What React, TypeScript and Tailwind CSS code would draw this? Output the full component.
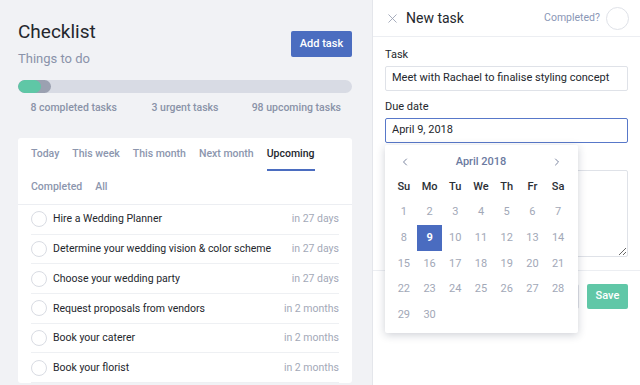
import { X, ChevronLeft, ChevronRight } from "lucide-react";

const TABS = ["Today", "This week", "This month", "Next month", "Upcoming"];

const TASKS = [
  { title: "Hire a Wedding Planner", due: "in 27 days" },
  { title: "Determine your wedding vision & color scheme", due: "in 27 days" },
  { title: "Choose your wedding party", due: "in 27 days" },
  { title: "Request proposals from vendors", due: "in 2 months" },
  { title: "Book your caterer", due: "in 2 months" },
  { title: "Book your florist", due: "in 2 months" },
];

const DAY_NAMES = ["Su", "Mo", "Tu", "We", "Th", "Fr", "Sa"];
const DAYS = Array.from({ length: 30 }, (_, i) => i + 1);

function Calendar() {
  return (
    <div className="absolute left-0 top-[27px] z-10 w-[193px] rounded-[2px] bg-white px-[6px] pb-[5px] pr-[7px] shadow-[0_2px_8px_rgba(30,40,70,0.22)]">
      <div className="flex items-center justify-between px-[8px] pt-[10px] pb-[5px] text-[11px] leading-[14px] text-[#6b7a9f]">
        <ChevronLeft size={12} strokeWidth={2} className="text-[#7b85a0]" />
        <span className="font-medium">April 2018</span>
        <ChevronRight size={12} strokeWidth={2} className="text-[#7b85a0]" />
      </div>
      <div className="grid grid-cols-7">
        {DAY_NAMES.map((d) => (
          <div key={d} className="flex h-[25.7px] items-center justify-center text-[11px] font-medium text-[#2b2f36]">
            {d}
          </div>
        ))}
        {DAYS.map((d) => (
          <div
            key={d}
            className={
              d === 9
                ? "flex h-[25.7px] items-center justify-center bg-[#4a6cc0] text-[11px] font-bold text-white"
                : "flex h-[25.7px] items-center justify-center text-[11px] text-[#a2a8b7]"
            }
          >
            {d}
          </div>
        ))}
      </div>
    </div>
  );
}

export default function App() {
  return (
    <div className="flex h-[385px] w-[640px] overflow-hidden bg-[#f1f2f5] font-['Roboto',sans-serif] text-[#24272d]">
      {/* left: checklist */}
      <div className="w-[372px] shrink-0 pl-[18px] pr-[20px] pt-[20px]">
        <div className="flex items-start justify-between">
          <div>
            <h1 className="text-[19px] leading-[24px]">Checklist</h1>
            <p className="mt-[6px] text-[13px] leading-[18px] text-[#8a93aa]">Things to do</p>
          </div>
          <button className="mt-[11px] h-[26px] w-[61px] rounded-[2px] bg-[#4b6dc0] text-[11px] font-medium text-white">
            Add task
          </button>
        </div>

        <div className="mt-[12px] flex h-[13px] overflow-hidden rounded-full bg-[#d8dbe4]">
          <div className="flex w-[33px] rounded-full bg-[#9ba1b1]">
            <div className="w-[23px] rounded-full bg-[#5fc7a6]" />
          </div>
        </div>

        <div className="mt-[8px] grid grid-cols-3 text-center text-[10.5px] leading-[13px] font-medium text-[#8a93a8]">
          <span>8 completed tasks</span>
          <span>3 urgent tasks</span>
          <span>98 upcoming tasks</span>
        </div>

        <div className="mt-[24px] rounded-[3px] bg-white">
          <div className="border-b border-[#eceef2] px-[13px]">
            <div className="flex gap-[13px] whitespace-nowrap text-[10.5px] leading-[14px] font-medium">
              {TABS.map((t) => (
                <span
                  key={t}
                  className={
                    t === "Upcoming"
                      ? "border-b-2 border-[#4b6dc0] pt-[9px] pb-[8px] text-[#24272d]"
                      : "border-b-2 border-transparent pt-[9px] pb-[8px] text-[#8c96ae]"
                  }
                >
                  {t}
                </span>
              ))}
            </div>
            <div className="flex gap-[13px] pt-[9px] pb-[10px] text-[10.5px] leading-[14px] font-medium text-[#8c96ae]">
              <span>Completed</span>
              <span>All</span>
            </div>
          </div>
          <div className="px-[13px]">
            {TASKS.map((t) => (
              <div key={t.title} className="flex h-[29.7px] items-center whitespace-nowrap border-b border-[#eef0f3] text-[10.5px]">
                <span className="h-[16px] w-[16px] shrink-0 rounded-full border border-[#d9dce3]" />
                <span className="ml-[6px] flex-1">{t.title}</span>
                <span className="text-[#a3a9b8]">{t.due}</span>
              </div>
            ))}
          </div>
        </div>
      </div>

      {/* right: new task panel */}
      <div className="w-[268px] shrink-0 border-l border-[#e4e6eb] bg-white">
        <div className="flex h-[37px] items-center border-b border-[#eceef2] pl-[12px] pr-[11px]">
          <X size={15} strokeWidth={1.4} className="text-[#9aa1b3]" />
          <span className="ml-[6px] text-[14px]">New task</span>
          <span className="ml-auto text-[10.5px] text-[#8a97b6]">Completed?</span>
          <span className="ml-[6px] h-[23px] w-[23px] rounded-full border border-[#dfe2e8]" />
        </div>

        <div className="border-b border-[#eceef2] px-[12px] pb-[13px]">
          <label className="mt-[11px] block text-[11px] leading-[14px]">Task</label>
          <div className="mt-[4px] flex h-[25px] items-center whitespace-nowrap rounded-[2px] border border-[#dfe2e8] px-[6px] text-[11px]">
            Meet with Rachael to finalise styling concept
          </div>

          <label className="mt-[9px] block text-[11px] leading-[14px]">Due date</label>
          <div className="relative mt-[4px]">
            <div className="flex h-[25px] items-center rounded-[2px] border border-[#5878c9] px-[6px] text-[11px]">
              April 9, 2018
            </div>
            <Calendar />
          </div>

          <label className="mt-[9px] block text-[11px] leading-[14px]">Description</label>
          <textarea className="mt-[4px] block h-[87px] w-full rounded-[2px] border border-[#dfe2e8]" />
        </div>

        <div className="flex justify-end gap-[8px] px-[12px] pt-[13px]">
          <button className="h-[25px] w-[50px] rounded-[2px] border border-[#dfe2e8]" />
          <button className="h-[25px] w-[41px] rounded-[2px] bg-[#60c7a7] text-[11px] font-medium text-white">
            Save
          </button>
        </div>
      </div>
    </div>
  );
}
